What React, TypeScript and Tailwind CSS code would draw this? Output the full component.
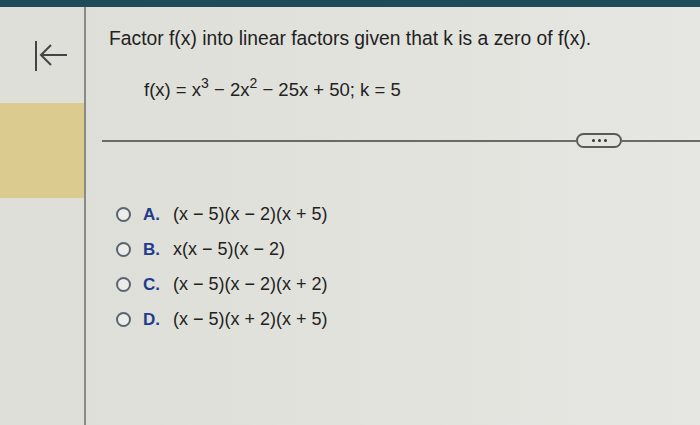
import React from "react";

const options = [
  { l: "A.", t: "(x − 5)(x − 2)(x + 5)" },
  { l: "B.", t: "x(x − 5)(x − 2)" },
  { l: "C.", t: "(x − 5)(x − 2)(x + 2)" },
  { l: "D.", t: "(x − 5)(x + 2)(x + 5)" },
];

export default function App() {
  return (
    <div
      className="w-[700px] h-[425px] flex flex-col bg-[#dfdfd9] text-[#222]"
      style={{ fontFamily: '"Liberation Sans", Arial, sans-serif' }}
    >
      <div className="h-[7px] bg-[#1f4c59] shrink-0" />
      <div className="flex flex-1 min-h-0">
        <div className="w-[86px] shrink-0 border-r-2 border-[#8a8a86] flex flex-col">
          <div className="h-[33px]" />
          <svg width="40" height="32" viewBox="0 0 40 32" className="ml-[33px]">
            <path d="M3 1 V31" stroke="#444" strokeWidth="2" fill="none" />
            <path d="M34 15 H9 M18 5 L8 15 L18 25" stroke="#444" strokeWidth="2" fill="none" />
          </svg>
          <div className="h-[31px]" />
          <div className="h-[95px] w-[84px] bg-[#dccb8e]" />
        </div>
        <div className="flex-1 flex flex-col bg-gradient-to-r from-[#dfdfd9] to-[#e6e6e2]">
          <div className="pl-[23px] pt-[20px] text-[19.3px] leading-[24px]">
            Factor f(x) into linear factors given that k is a zero of f(x).
          </div>
          <div className="pl-[58px] pt-[24px] text-[18.5px] leading-[30px]">
            f(x) = x<sup className="text-[14px] align-baseline relative -top-[8px]">3</sup> − 2x
            <sup className="text-[14px] align-baseline relative -top-[8px]">2</sup> − 25x + 50; k = 5
          </div>
          <div className="mt-[28px] ml-[16px] flex items-center">
            <div className="flex-1 h-[2px] bg-[#6a6a66]" />
            <div className="w-[46px] h-[15px] rounded-full border-2 border-[#5a5a56] flex items-center justify-center gap-[3px] bg-[#e4e4e0]">
              <span className="w-[3px] h-[3px] rounded-full bg-[#333]" />
              <span className="w-[3px] h-[3px] rounded-full bg-[#333]" />
              <span className="w-[3px] h-[3px] rounded-full bg-[#333]" />
            </div>
            <div className="w-[78px] h-[2px] bg-[#6a6a66]" />
          </div>
          <div className="mt-[55px] pl-[30px] flex flex-col gap-[12px]">
            {options.map((o) => (
              <div key={o.l} className="flex items-center h-[23px] text-[18px]">
                <span className="w-[15px] h-[15px] rounded-full border-2 border-[#5a6470] bg-[#ececea]" />
                <span className="ml-[12px] w-[30px] font-bold text-[#1f3b8c] text-[17px]">{o.l}</span>
                <span>{o.t}</span>
              </div>
            ))}
          </div>
        </div>
      </div>
    </div>
  );
}
